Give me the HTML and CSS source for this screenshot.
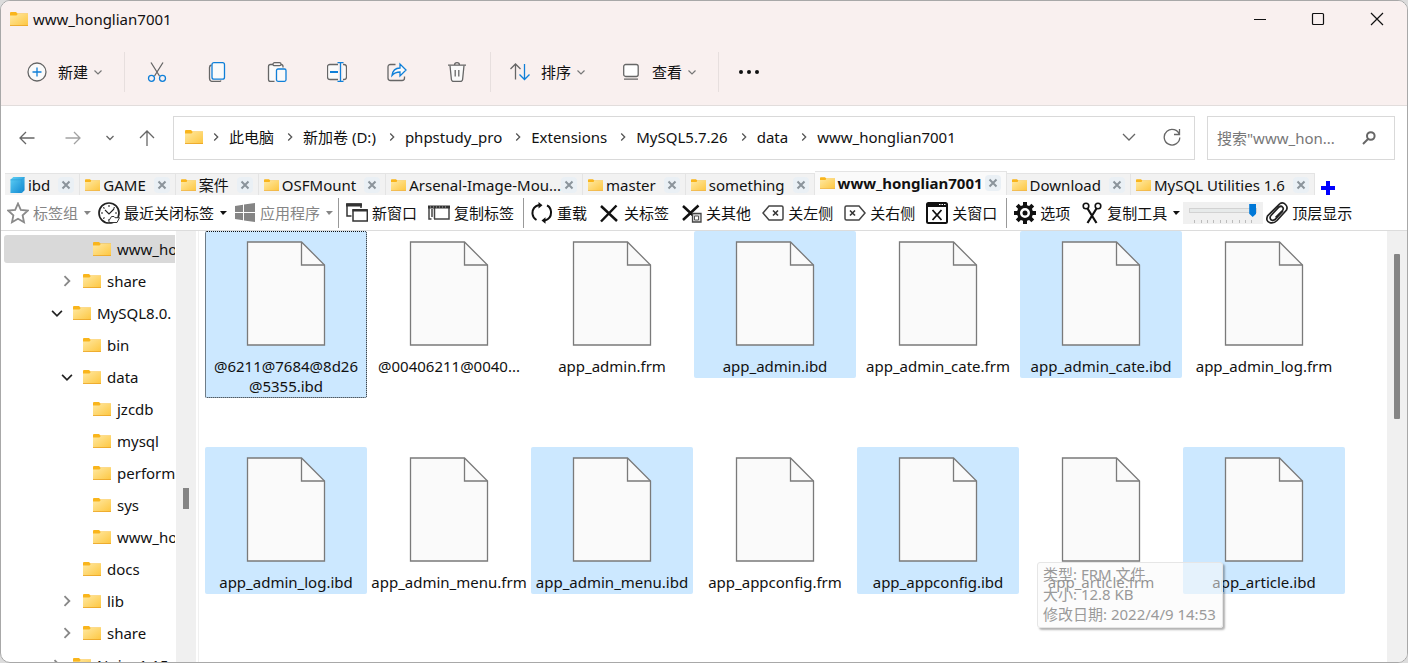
FILE: index.html
```html
<!DOCTYPE html>
<html lang="zh-CN">
<head>
  <meta charset="UTF-8">
  <meta name="viewport" content="width=device-width, initial-scale=1">
  <title>www_honglian7001</title>
  <link rel="stylesheet" href="styles.css">
</head>
<body>
  <!-- shared icons -->
  <svg class="sprite" aria-hidden="true">
    <defs>
      <linearGradient id="gold" x1="0" y1="0" x2="1" y2="1">
        <stop offset="0" stop-color="#ffe9a2"/>
        <stop offset="1" stop-color="#fdc640"/>
      </linearGradient>
      <linearGradient id="sky" x1="0" y1="0" x2="1" y2="1">
        <stop offset="0" stop-color="#5fd0f5"/>
        <stop offset="1" stop-color="#0f86d0"/>
      </linearGradient>
    </defs>
    <symbol id="folder" viewBox="0 0 18 14">
      <path d="M0 1q0-1 1-1h5l1.500 1.500H18V5H0z" fill="#f9b51c"/>
      <path d="M0 3.500h6.500L8 1.700h10V14H0z" fill="url(#gold)"/>
      <path d="M0 13.300h18V14H0z" fill="#e9a020"/>
    </symbol>
    <symbol id="file" viewBox="0 0 80 105">
      <path d="M1.500 1H55.500L78.500 24V104H1.500Z" fill="#fafafa" stroke="#7a7a7a" stroke-width="1.300"/>
      <path d="M55.500 1V24H78.500" fill="none" stroke="#7a7a7a" stroke-width="1.300"/>
    </symbol>
    <symbol id="down" viewBox="0 0 10 10"><path d="M1.500 3.500 5 7l3.500-3.500" fill="none" stroke="currentColor" stroke-width="1.200"/></symbol>
    <symbol id="right" viewBox="0 0 10 10"><path d="M3.200 1.500 6.700 5 3.200 8.500" fill="none" stroke="currentColor" stroke-width="1.300"/></symbol>
    <symbol id="close" viewBox="0 0 10 10"><path d="M1.500 1.500l7 7M8.500 1.500l-7 7" fill="none" stroke="#8b949b" stroke-width="2"/></symbol>
  </svg>

  <div class="window">
    <header class="header">
      <div class="titlebar">
        <svg class="folder"><use href="#folder"/></svg>
        <h1>www_honglian7001</h1>
        <div class="controls">
          <button type="button" aria-label="最小化"><svg viewBox="0 0 14 14"><path d="M1 7.500h12"/></svg></button>
          <button type="button" aria-label="最大化"><svg viewBox="0 0 14 14"><rect x="1.500" y="1.500" width="11" height="11" rx="1"/></svg></button>
          <button type="button" aria-label="关闭"><svg viewBox="0 0 14 14"><path d="M1 1l12 12M13 1L1 13"/></svg></button>
        </div>
      </div>

      <div class="commands">
        <button type="button" class="command">
          <svg viewBox="0 0 20 20"><circle cx="10" cy="10" r="9" fill="#fafafa"/><path class="blue" d="M10 5.500v9M5.500 10h9"/></svg>
          新建
          <svg class="arrow"><use href="#down"/></svg>
        </button>
        <span class="divider"></span>
        <div class="command-icons">
          <button type="button" aria-label="剪切"><svg viewBox="0 0 20 20"><path d="M4 .5l8.500 13.500M16 .5L7.500 14"/><circle class="blue" cx="4.500" cy="16.300" r="3"/><circle class="blue" cx="15.500" cy="16.300" r="3"/></svg></button>
          <button type="button" aria-label="复制"><svg viewBox="0 0 20 20"><path d="M4.500 3Q2.500 3.500 2.500 5.500V16q0 3.500 3.500 3.500h6.500q1 0 1.500-1"/><rect class="blue" x="5" y=".7" width="12.500" height="16.500" rx="2" fill="#fafafa"/></svg></button>
          <button type="button" aria-label="粘贴"><svg viewBox="0 0 20 20"><path d="M6 2.500H3.500q-2 0-2 2v13q0 2 2 2H7.500L9 6h7V4.500q0-2-2-2" fill="#fafafa" stroke="none"/><path d="M6 2.500H3.500q-2 0-2 2v13q0 2 2 2H7.500M14 2.500q2 0 2 2v1"/><rect x="6" y=".7" width="8" height="3" rx="1.500"/><rect class="blue" x="9.500" y="7" width="9.500" height="12.300" rx="1.500" fill="#fafafa"/></svg></button>
          <button type="button" aria-label="重命名"><svg viewBox="0 0 20 20"><path d="M11 2.500H3q-2.500 0-2.500 2.500v10q0 2.500 2.500 2.500h8M16 2.500h1q2.500 0 2.500 2.500v10q0 2.500-2.500 2.500h-1" fill="#fafafa"/><path class="blue" d="M10.500.7h6M10.500 19.300h6M13.500.7v18.600"/><path class="blue thick" d="M3 10h8"/></svg></button>
          <button type="button" aria-label="共享"><svg viewBox="0 0 20 20"><path d="M8.500 2.500H3.500Q1 2.500 1 5v11q0 2.500 2.500 2.500H15q2.500 0 2.500-2.500v-1.500"/><path class="blue" d="M5 13.500q1-7.500 8-7.500V2l6 6-6 6V10q-5 0-8 3.500z" fill="#fafafa"/></svg></button>
          <button type="button" aria-label="删除"><svg viewBox="0 0 20 20"><path d="M3 3.500l1.400 14q.3 2 2.200 2h6.800q1.900 0 2.200-2L17 3.500" fill="#fafafa"/><path d="M1 3.200h18M7.500 3q0-2.300 2.500-2.300T12.500 3M8.200 8v6.500M11.800 8v6.500"/></svg></button>
        </div>
        <span class="divider"></span>
        <button type="button" class="command">
          <svg viewBox="0 0 20 20"><path d="M5.500 17.500V2M.5 7l5-5 5 5"/><path class="blue" d="M14.500 2v15.500M9.500 12.500l5 5 5-5"/></svg>
          排序
          <svg class="arrow"><use href="#down"/></svg>
        </button>
        <button type="button" class="command view">
          <svg viewBox="0 0 20 20"><rect x="2.700" y="2.500" width="14.500" height="12" rx="2" fill="#fff"/><path d="M3 17.200h14"/></svg>
          查看
          <svg class="arrow"><use href="#down"/></svg>
        </button>
        <span class="divider"></span>
        <button type="button" class="more" aria-label="查看更多"><svg viewBox="0 0 22 6"><circle cx="3" cy="3" r="2"/><circle cx="11" cy="3" r="2"/><circle cx="19" cy="3" r="2"/></svg></button>
      </div>
    </header>

    <div class="location">
      <div class="history">
        <button type="button" aria-label="后退"><svg viewBox="0 0 16 16"><path d="M15.500 8H1M7 2L1 8l6 6"/></svg></button>
        <button type="button" aria-label="前进" class="off"><svg viewBox="0 0 16 16"><path d="M.5 8H15M9 2l6 6-6 6"/></svg></button>
        <button type="button" aria-label="最近浏览的位置"><svg viewBox="0 0 16 16"><path d="M4.500 6L8 9.500 11.500 6"/></svg></button>
        <button type="button" aria-label="向上"><svg viewBox="0 0 16 16"><path d="M8 16V1M1 8l7-7 7 7"/></svg></button>
      </div>
      <nav class="address" aria-label="地址">
        <svg class="folder"><use href="#folder"/></svg>
        <ol>
          <li><svg><use href="#right"/></svg><a href="#">此电脑</a></li>
          <li><svg><use href="#right"/></svg><a href="#">新加卷 (D:)</a></li>
          <li><svg><use href="#right"/></svg><a href="#">phpstudy_pro</a></li>
          <li><svg><use href="#right"/></svg><a href="#">Extensions</a></li>
          <li><svg><use href="#right"/></svg><a href="#">MySQL5.7.26</a></li>
          <li><svg><use href="#right"/></svg><a href="#">data</a></li>
          <li><svg><use href="#right"/></svg><a href="#">www_honglian7001</a></li>
        </ol>
        <button type="button" aria-label="以前的位置"><svg viewBox="0 0 18 18"><path d="M3 6l6 6 6-6"/></svg></button>
        <button type="button" aria-label="刷新"><svg viewBox="0 0 18 18"><path d="M16.500 7A7.800 7.800 0 1 0 16.800 9.500M16.500 1v5.500H11"/></svg></button>
      </nav>
      <div class="search">
        <input type="text" aria-label="搜索" placeholder="搜索&quot;www_hon...">
        <svg viewBox="0 0 14 14"><circle cx="8.800" cy="5" r="3.800"/><path d="M6 8L1 13"/></svg>
      </div>
    </div>

    <div class="tabs">
      <div class="tab">
        <svg viewBox="0 0 15 17"><path d="M3 0h12v14l-3 3H0V3z" fill="url(#sky)"/><path d="M0 3h12l3-3M12 3v14" fill="none" stroke="#2b9cd8" stroke-width=".7"/></svg>
        <button type="button" class="name">ibd</button><button type="button" class="close" aria-label="关闭"><svg><use href="#close"/></svg></button>
      </div>
      <div class="tab"><svg><use href="#folder"/></svg><button type="button" class="name">GAME</button><button type="button" class="close" aria-label="关闭"><svg><use href="#close"/></svg></button></div>
      <div class="tab"><svg><use href="#folder"/></svg><button type="button" class="name">案件</button><button type="button" class="close" aria-label="关闭"><svg><use href="#close"/></svg></button></div>
      <div class="tab"><svg><use href="#folder"/></svg><button type="button" class="name">OSFMount</button><button type="button" class="close" aria-label="关闭"><svg><use href="#close"/></svg></button></div>
      <div class="tab long"><svg><use href="#folder"/></svg><button type="button" class="name">Arsenal-Image-Mou...</button><button type="button" class="close" aria-label="关闭"><svg><use href="#close"/></svg></button></div>
      <div class="tab"><svg><use href="#folder"/></svg><button type="button" class="name">master</button><button type="button" class="close" aria-label="关闭"><svg><use href="#close"/></svg></button></div>
      <div class="tab"><svg><use href="#folder"/></svg><button type="button" class="name">something</button><button type="button" class="close" aria-label="关闭"><svg><use href="#close"/></svg></button></div>
      <div class="tab active"><svg><use href="#folder"/></svg><button type="button" class="name">www_honglian7001</button><button type="button" class="close" aria-label="关闭"><svg><use href="#close"/></svg></button></div>
      <div class="tab"><svg><use href="#folder"/></svg><button type="button" class="name">Download</button><button type="button" class="close" aria-label="关闭"><svg><use href="#close"/></svg></button></div>
      <div class="tab"><svg><use href="#folder"/></svg><button type="button" class="name">MySQL Utilities 1.6</button><button type="button" class="close" aria-label="关闭"><svg><use href="#close"/></svg></button></div>
      <button type="button" class="add" aria-label="新建标签"><svg viewBox="0 0 14 14"><path d="M7 0v14M0 7h14" stroke="#00f" stroke-width="4"/></svg></button>
    </div>

    <div class="tools">
      <button type="button" class="tool menu off">
        <svg viewBox="0 0 22 22"><path d="M11 1.500l2.800 6.300 6.900.8-5.100 4.700 1.400 6.900-6-3.500-6 3.500 1.400-6.900L1.300 8.600l6.900-.8z" fill="#fff" stroke="#8a8a8a" stroke-width="1.800"/></svg>
        标签组
      </button>
      <button type="button" class="tool menu">
        <svg viewBox="0 0 22 22"><circle cx="11" cy="11" r="10" fill="#fff" stroke="#222" stroke-width="1.700"/><path d="M11 3v2M11 17v2M3 11h2M17 11h2M5.300 5.300l1.200 1.200M16.700 5.300l-1.200 1.200M5.300 16.700l1.200-1.200M7 8l4 4 5-5" fill="none" stroke="#222" stroke-width="1.100"/><path d="M11 18.500l2.500-4H16l1 1.200h4.500L19 20.500h-8z" fill="#fff" stroke="#333"/></svg>
        最近关闭标签
      </button>
      <button type="button" class="tool menu off">
        <svg viewBox="0 0 22 22"><path d="M1 4l8-1.300V10H1zM10 2.500L21 1v9H10zM1 11h8v7.300L1 17zM10 11h11v9l-11-1.500z" fill="#858585"/></svg>
        应用程序
      </button>
      <span class="split"></span>
      <button type="button" class="tool">
        <svg viewBox="0 0 22 22"><path d="M5.500 14H1V2h14v4" fill="none" stroke="#333" stroke-width="1.500"/><path d="M0 1.500h16v3H0z" fill="#333"/><path d="M7 8h14.300v11H7z" fill="#fff" stroke="#333" stroke-width="1.500"/><path d="M6.500 7h15v2.500h-15z" fill="#333"/></svg>
        新窗口
      </button>
      <button type="button" class="tool">
        <svg viewBox="0 0 22 22"><path d="M6 5h15v12H6M1 4v13h2.500M4 7v8M6.500 6v11" fill="none" stroke="#444" stroke-width="1.500"/><path d="M0 3.500h22v3H0z" fill="#333"/><path d="M2 5h18" stroke="#aaa" stroke-dasharray="1 2"/></svg>
        复制标签
      </button>
      <span class="split"></span>
      <button type="button" class="tool">
        <svg viewBox="0 0 22 22"><path d="M8 3Q1 5 1.500 12q.5 4 4 6M14 18.500q6.500-2 6-9Q19.500 5 16 3.500" fill="none" stroke="#111" stroke-width="2"/><path d="M7.500 0l4 3.200-4 3.300zM14.500 15.300v6.500l-4-3.300z" fill="#111"/></svg>
        重载
      </button>
      <button type="button" class="tool">
        <svg viewBox="0 0 22 22"><path d="M3 4l16 15M18.500 3.500L3 19.500" stroke="#111" stroke-width="2.500"/></svg>
        关标签
      </button>
      <button type="button" class="tool">
        <svg viewBox="0 0 22 22"><path d="M3 4l14 13M18.500 3.500L3 18" stroke="#111" stroke-width="2.500"/><path d="M12.500 11.500h8.500v8.500h-8.500z" fill="#ddd" stroke="#444" stroke-width="1.300"/><path d="M14.500 14h4v4h-4z" fill="#fff" stroke="#555"/></svg>
        关其他
      </button>
      <button type="button" class="tool">
        <svg viewBox="0 0 22 22"><path d="M7 4h12.500q1.500 0 1.500 1.500v11q0 1.500-1.500 1.500H7L1 11z" fill="#fff" stroke="#444" stroke-width="1.500"/><path d="M11 8.500l5 5M16 8.500l-5 5" stroke="#333" stroke-width="1.600"/></svg>
        关左侧
      </button>
      <button type="button" class="tool">
        <svg viewBox="0 0 22 22"><path d="M15 4H2.500Q1 4 1 5.500v11Q1 18 2.500 18H15l6-7z" fill="#fff" stroke="#444" stroke-width="1.500"/><path d="M6 8.500l5 5M11 8.500l-5 5" stroke="#333" stroke-width="1.600"/></svg>
        关右侧
      </button>
      <button type="button" class="tool">
        <svg viewBox="0 0 22 22"><rect x="1" y="1" width="20" height="20" rx="1.500" fill="#fff" stroke="#111" stroke-width="2"/><path d="M1 1h20v4H1z" fill="#111"/><path d="M13 2.500h7" stroke="#fff" stroke-dasharray="1.500 1"/><path d="M6.500 8l9 10M15.500 8l-9 10" stroke="#111" stroke-width="1.800"/></svg>
        关窗口
      </button>
      <span class="split"></span>
      <button type="button" class="tool">
        <svg viewBox="0 0 22 22"><path d="M11 0v22M0 11h22M3.200 3.200l15.600 15.600M18.800 3.200L3.200 18.800" stroke="#111" stroke-width="4"/><circle cx="11" cy="11" r="6.500" fill="#fff" stroke="#111" stroke-width="3"/><circle cx="11" cy="11" r="2.500" fill="#111"/></svg>
        选项
      </button>
      <button type="button" class="tool menu">
        <svg viewBox="0 0 22 22"><g fill="none" stroke="#111"><circle cx="5" cy="4" r="2.800" stroke-width="1.600"/><circle cx="17" cy="4" r="2.800" stroke-width="1.600"/><path d="M6.500 6.500L15.500 21M15.500 6.500L6.500 21" stroke-width="2.200"/></g></svg>
        复制工具
      </button>
      <div class="slider">
        <input type="range" min="0" max="10" value="10" aria-label="透明度">
        <div class="ticks"><i></i><i></i><i></i><i></i><i></i><i></i><i></i><i></i><i></i><i></i></div>
      </div>
      <button type="button" class="tool">
        <svg viewBox="0 0 22 22"><path d="M17 9l-8 8.500q-3 2-4.500-.5-1-2 .5-3.500l8-8.500q2-1.500 3.500 0t0 3.500L9.500 15.500M14 1.500q3-1.500 5.500 1t1 5.500L11 18.500q-3.500 3.500-7.500 2T1.500 14L14 1.500" fill="none" stroke="#222" stroke-width="1.700"/></svg>
        顶层显示
      </button>
    </div>

    <main class="panes">
      <ul class="tree">
        <li class="depth-3 selected"><svg class="folder"><use href="#folder"/></svg>www_honglian7001</li>
        <li class="depth-2"><svg class="twist"><use href="#right"/></svg><svg class="folder"><use href="#folder"/></svg>share</li>
        <li class="depth-1"><svg class="twist open"><use href="#down"/></svg><svg class="folder"><use href="#folder"/></svg>MySQL8.0.</li>
        <li class="depth-2"><svg class="folder"><use href="#folder"/></svg>bin</li>
        <li class="depth-2"><svg class="twist open"><use href="#down"/></svg><svg class="folder"><use href="#folder"/></svg>data</li>
        <li class="depth-3"><svg class="folder"><use href="#folder"/></svg>jzcdb</li>
        <li class="depth-3"><svg class="folder"><use href="#folder"/></svg>mysql</li>
        <li class="depth-3"><svg class="folder"><use href="#folder"/></svg>perform</li>
        <li class="depth-3"><svg class="folder"><use href="#folder"/></svg>sys</li>
        <li class="depth-3"><svg class="folder"><use href="#folder"/></svg>www_honglian7001</li>
        <li class="depth-2"><svg class="folder"><use href="#folder"/></svg>docs</li>
        <li class="depth-2"><svg class="twist"><use href="#right"/></svg><svg class="folder"><use href="#folder"/></svg>lib</li>
        <li class="depth-2"><svg class="twist"><use href="#right"/></svg><svg class="folder"><use href="#folder"/></svg>share</li>
        <li class="depth-1"><svg class="twist"><use href="#right"/></svg><svg class="folder"><use href="#folder"/></svg>Nginx1.15</li>
      </ul>
      <div class="scroll tree-scroll"><span></span></div>

      <ul class="files">
        <li class="selected focused"><svg><use href="#file"/></svg><span>@6211@7684@8d26<br>@5355.ibd</span></li>
        <li><svg><use href="#file"/></svg><span>@00406211@0040...</span></li>
        <li><svg><use href="#file"/></svg><span>app_admin.frm</span></li>
        <li class="selected"><svg><use href="#file"/></svg><span>app_admin.ibd</span></li>
        <li><svg><use href="#file"/></svg><span>app_admin_cate.frm</span></li>
        <li class="selected"><svg><use href="#file"/></svg><span>app_admin_cate.ibd</span></li>
        <li><svg><use href="#file"/></svg><span>app_admin_log.frm</span></li>
        <li class="selected"><svg><use href="#file"/></svg><span>app_admin_log.ibd</span></li>
        <li><svg><use href="#file"/></svg><span>app_admin_menu.frm</span></li>
        <li class="selected"><svg><use href="#file"/></svg><span>app_admin_menu.ibd</span></li>
        <li><svg><use href="#file"/></svg><span>app_appconfig.frm</span></li>
        <li class="selected"><svg><use href="#file"/></svg><span>app_appconfig.ibd</span></li>
        <li>
          <svg><use href="#file"/></svg><span>app_article.frm</span>
          <div class="tooltip" role="tooltip">类型: FRM 文件<br>大小: 12.8 KB<br>修改日期: 2022/4/9 14:53</div>
        </li>
        <li class="selected"><svg><use href="#file"/></svg><span>app_article.ibd</span></li>
      </ul>
      <div class="scroll file-scroll"><span></span></div>
    </main>
  </div>
</body>
</html>
```
FILE: styles.css
```css
* {
  box-sizing: border-box;
}

body {
  margin: 0;
  background: #dcdcdc;
  color: #111;
  font: 15px/20px "Noto Sans", "Noto Sans CJK SC", sans-serif;
}

button,
input {
  margin: 0;
  padding: 0;
  border: 0;
  background: none;
  color: inherit;
  font: inherit;
}

ul,
ol {
  margin: 0;
  padding: 0;
  list-style: none;
}

svg {
  flex: none;
}

.sprite {
  position: absolute;
  width: 0;
  height: 0;
}

.folder {
  width: 18px;
  height: 14px;
}

.window {
  display: flex;
  flex-direction: column;
  height: 100vh;
  border: 1px solid #a8a8a8;
  border-radius: 10px;
  background: #fff;
  overflow: hidden;
}

/* title bar and command bar */
.header {
  background: #f9f0ef;
  border-bottom: 1px solid #e2dddc;
}

.titlebar {
  display: flex;
  align-items: center;
  gap: 5px;
  height: 36px;
  padding-left: 9px;
}

.titlebar h1 {
  margin: 0;
  font-size: 15px;
  font-weight: 400;
}

.controls {
  display: flex;
  margin-left: auto;
}

.controls button {
  display: grid;
  place-items: center;
  width: 58px;
  height: 36px;
}

.controls button:last-child {
  width: 60px;
}

.controls svg {
  width: 14px;
  height: 14px;
  fill: none;
  stroke: #111;
  stroke-width: 1.200;
}

.commands {
  display: flex;
  align-items: center;
  height: 68px;
  padding: 2px 0 0 26px;
}

.commands svg {
  width: 20px;
  height: 20px;
  fill: none;
  stroke: #666;
  stroke-width: 1.300;
}

.commands .blue {
  stroke: #0f7fd8;
}

.commands .thick {
  stroke-width: 2;
}

.command {
  display: flex;
  align-items: center;
  gap: 11px;
}

.command svg.arrow {
  width: 10px;
  height: 10px;
  margin-left: -6px;
  color: #777;
}

.view {
  margin-left: 35px;
}

.divider {
  width: 1px;
  height: 40px;
  margin: 0 19px 0 21px;
  background: #e7dfde;
}

.command-icons {
  display: flex;
  gap: 40px;
  margin: 0 2px 0 3px;
}

.command-icons button {
  display: flex;
}

.commands .more svg {
  display: block;
  width: 22px;
  height: 6px;
  fill: #111;
  stroke: none;
}

/* address row */
.location {
  display: flex;
  align-items: center;
  gap: 12px;
  padding: 10px 12px 10px 18px;
}

.location svg {
  fill: none;
  stroke: #666;
  stroke-width: 1.300;
}

.history {
  display: flex;
  gap: 21px;
  padding-right: 6px;
}

.history button {
  display: flex;
}

.history svg {
  width: 16px;
  height: 16px;
}

.history .off {
  margin-left: 9px;
  opacity: .6;
}

.address {
  display: flex;
  flex: 1;
  align-items: center;
  height: 44px;
  padding: 0 13px 2px 11px;
  border: 1px solid #d9d9d9;
}

.address use {
  stroke: none;
}

.address ol {
  display: flex;
  flex: 1;
  gap: 3px;
}

.address li {
  display: flex;
  align-items: center;
}

.address li svg {
  width: 10px;
  height: 10px;
  margin: 0 8px;
  color: #555;
}

.address a {
  color: inherit;
  text-decoration: none;
}

.address button {
  display: flex;
  margin-left: 25px;
}

.address button svg {
  width: 18px;
  height: 18px;
}

.search {
  display: flex;
  align-items: center;
  width: 188px;
  height: 44px;
  padding: 0 18px 0 9px;
  border: 1px solid #d9d9d9;
}

.search input {
  flex: 1;
  min-width: 0;
}

.search input::placeholder {
  color: #777;
  opacity: 1;
}

.search svg {
  width: 14px;
  height: 14px;
  stroke-width: 2;
}

/* folder tabs */
.tabs {
  display: flex;
  align-items: flex-end;
  height: 25px;
  padding-left: 4px;
}

.tab {
  display: flex;
  align-items: center;
  height: 22px;
  padding: 0 5px;
  border: 1px solid #e4e4e4;
  border-width: 1px 1px 0 0;
  background: #f2f2f2;
}

.tab > svg {
  width: 15px;
  height: 16px;
}

.tab .name {
  margin: 0 8px 0 3px;
}

.tab .close {
  display: flex;
  padding: 3px;
  border-radius: 4px;
  background: #eaf0f5;
}

.tab .close svg {
  width: 10px;
  height: 10px;
}

.tab.long .name {
  margin-right: 0;
}

.tab.active {
  height: 24px;
  padding-bottom: 2px;
  background: #fafafa;
  font-weight: 700;
}

.tab.active .name {
  margin-right: 2px;
}

.add {
  display: flex;
  margin-left: 6px;
}

.add svg {
  width: 14px;
  height: 14px;
}

/* tab toolbar */
.tools {
  display: flex;
  align-items: center;
  gap: 7px;
  height: 36px;
  padding-left: 6px;
  border-bottom: 1px solid #dcdcdc;
}

.tool {
  display: flex;
  align-items: center;
  gap: 4px;
  padding-right: 4px;
  white-space: nowrap;
}

.tool svg {
  width: 22px;
  height: 22px;
}

.tool.menu {
  padding: 0;
}

.tool.menu::after {
  content: "";
  margin-left: 2px;
  border: solid transparent;
  border-width: 4px 4px 0 3px;
  border-top-color: currentColor;
}

.tool.off {
  color: #858585;
}

.split {
  width: 1px;
  height: 30px;
  margin-left: -2px;
  background: #999;
}

.slider {
  width: 80px;
  height: 22px;
  margin: 0 -4px;
  padding: 2px 6px 0;
  background: #f0f0f0;
}

.slider input {
  display: block;
  width: 100%;
  height: 14px;
  appearance: none;
}

.slider input::-webkit-slider-runnable-track {
  height: 5px;
  border: 1px solid #d2d2d2;
  background: #e7eaea;
}

.slider input::-webkit-slider-thumb {
  width: 7px;
  height: 13px;
  margin-top: -5px;
  appearance: none;
  background: #0078d7;
  clip-path: polygon(0 0, 100% 0, 100% 75%, 50% 100%, 0 75%);
}

.ticks {
  display: flex;
  justify-content: space-between;
  padding: 2px 5px 0;
}

.ticks i {
  width: 1px;
  height: 3px;
  background: #bbb;
}

/* folder tree and file list */
.panes {
  display: flex;
  flex: 1;
  min-height: 0;
}

.tree {
  display: flex;
  flex-direction: column;
  gap: 4px;
  width: 174px;
  padding: 4px 0 0 3px;
  overflow: hidden;
}

.tree li {
  display: flex;
  flex: none;
  align-items: center;
  height: 28px;
  border-radius: 3px 0 0 3px;
  white-space: nowrap;
}

.tree .selected {
  background: #d9d9d9;
}

.tree .folder {
  margin-right: 6px;
}

.tree .twist {
  width: 14px;
  height: 14px;
  margin: 0 9px 0 -23px;
  color: #888;
}

.tree .open {
  color: #222;
}

.depth-1 {
  padding-left: 69px;
}

.depth-2 {
  padding-left: 79px;
}

.depth-3 {
  padding-left: 89px;
}

.scroll {
  flex: none;
  width: 20px;
  background: #f0f0f0;
}

.scroll span {
  display: block;
  width: 6px;
  margin-left: 7px;
  background: #858585;
}

.tree-scroll {
  margin-left: 1px;
}

.tree-scroll span {
  height: 21px;
  margin-top: 257px;
}

.file-scroll span {
  height: 165px;
  margin-top: 23px;
  border-radius: 1px;
}

.files {
  display: grid;
  flex: 1;
  grid-template-columns: repeat(auto-fill, 162px);
  grid-auto-rows: 216px;
  align-items: start;
  column-gap: 1px;
  margin-left: 2px;
  padding-left: 6px;
  border-left: 1px solid #f0f0f0;
}

.files li {
  position: relative;
  display: flex;
  flex-direction: column;
  align-items: center;
  gap: 10px;
  padding: 10px 0 2px;
  border-radius: 2px;
  text-align: center;
  white-space: nowrap;
}

.files svg {
  width: 80px;
  height: 105px;
}

.files .selected {
  background: #cce8ff;
}

.files .focused {
  outline: 1px dotted #111;
  outline-offset: -1px;
}

.tooltip {
  position: absolute;
  z-index: 1;
  top: 115px;
  left: 17px;
  padding: 1px 6px 3px 5px;
  border: 1px solid #e6e6e6;
  border-radius: 3px;
  background: rgba(249, 249, 249, .55);
  box-shadow: 2px 2px 2px rgba(0, 0, 0, .3);
  color: #9a9a9a;
  text-align: left;
}
```
